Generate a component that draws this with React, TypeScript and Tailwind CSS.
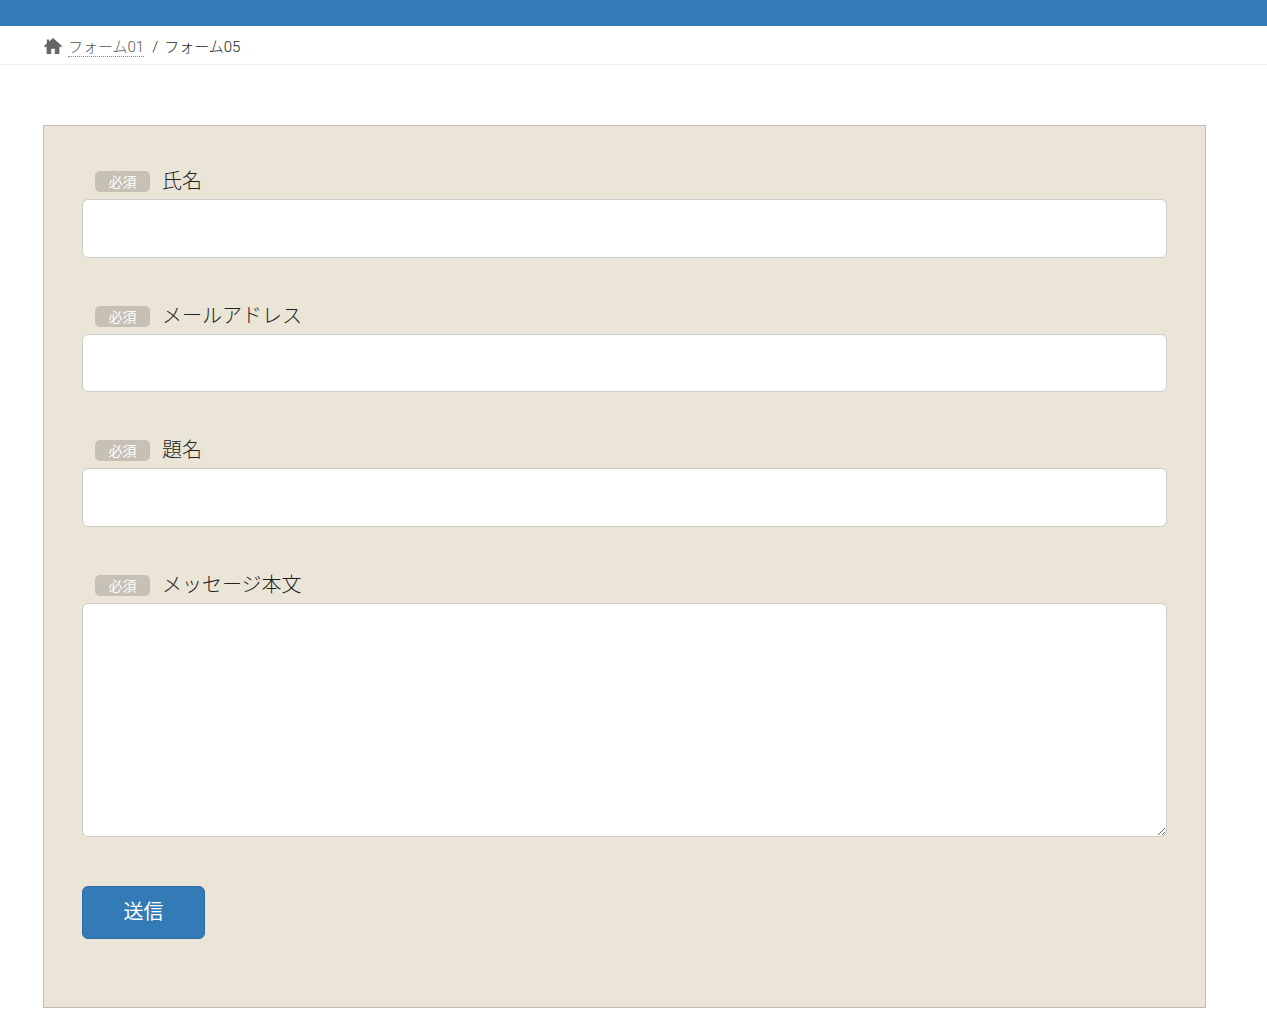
import React from "react";

const Field: React.FC<{ label: string; multiline?: boolean }> = ({ label, multiline }) => (
  <div className="mb-[47px]">
    <div className="flex items-center h-[22px] mb-[7px] pl-[13px]">
      <span className="flex items-center justify-center self-start mt-[0.9px] w-[55px] h-[21px] pt-[2px] rounded-[5px] bg-[#c6c0b5] text-[14px] font-normal text-white">
        必須
      </span>
      <span className="ml-[12px] text-[20px] font-light leading-none text-[#222]">{label}</span>
    </div>
    {multiline ? (
      <textarea className="block w-full h-[234px] rounded-[6px] border border-[#ccc] bg-white" />
    ) : (
      <input type="text" className="block w-full h-[58.67px] rounded-[6px] border border-[#ccc] bg-white" />
    )}
  </div>
);

export default function App() {
  return (
    <div className="min-h-[1029px] bg-white font-['Roboto','Noto_Sans_CJK_JP',sans-serif]">
      <div className="h-[26px] bg-[#337ab7]" />
      <div className="flex items-center h-[39px] pl-[44px] pt-[4px] border-b border-[#eee] text-[15px] font-light">
        <svg viewBox="0 0 18 16" className="w-[18px] h-[16px] -mt-[2px] fill-[#666]">
          <path d="M9 0 L18 8 L16.8 9.4 L15.4 8.2 L15.4 16 L10.8 16 L10.8 10.8 L7.2 10.8 L7.2 16 L2.6 16 L2.6 8.2 L1.2 9.4 L0 8 L2.8 5.5 L2.8 1.4 L5 1.4 L5 3.6 Z" />
        </svg>
        <a className="ml-[6px] text-[#555] border-b border-dotted border-[#888] leading-[18px]">フォーム01</a>
        <span className="ml-[8px] mr-[6px] text-[#222]">/</span>
        <span className="text-[#222]">フォーム05</span>
      </div>
      <div className="pt-[60px] pl-[43px]">
        <div className="w-[1163px] h-[883px] border border-[#c4bab2] bg-[#eae5d7] pt-[44px] px-[38px]">
          <Field label="氏名" />
          <Field label="メールアドレス" />
          <Field label="題名" />
          <Field label="メッセージ本文" multiline />
          <button className="block mt-[49px] w-[123px] h-[53px] rounded-[6px] border border-[#2e6da4] bg-[#337ab7] text-[20px] font-normal text-white">
            送信
          </button>
        </div>
      </div>
    </div>
  );
}
